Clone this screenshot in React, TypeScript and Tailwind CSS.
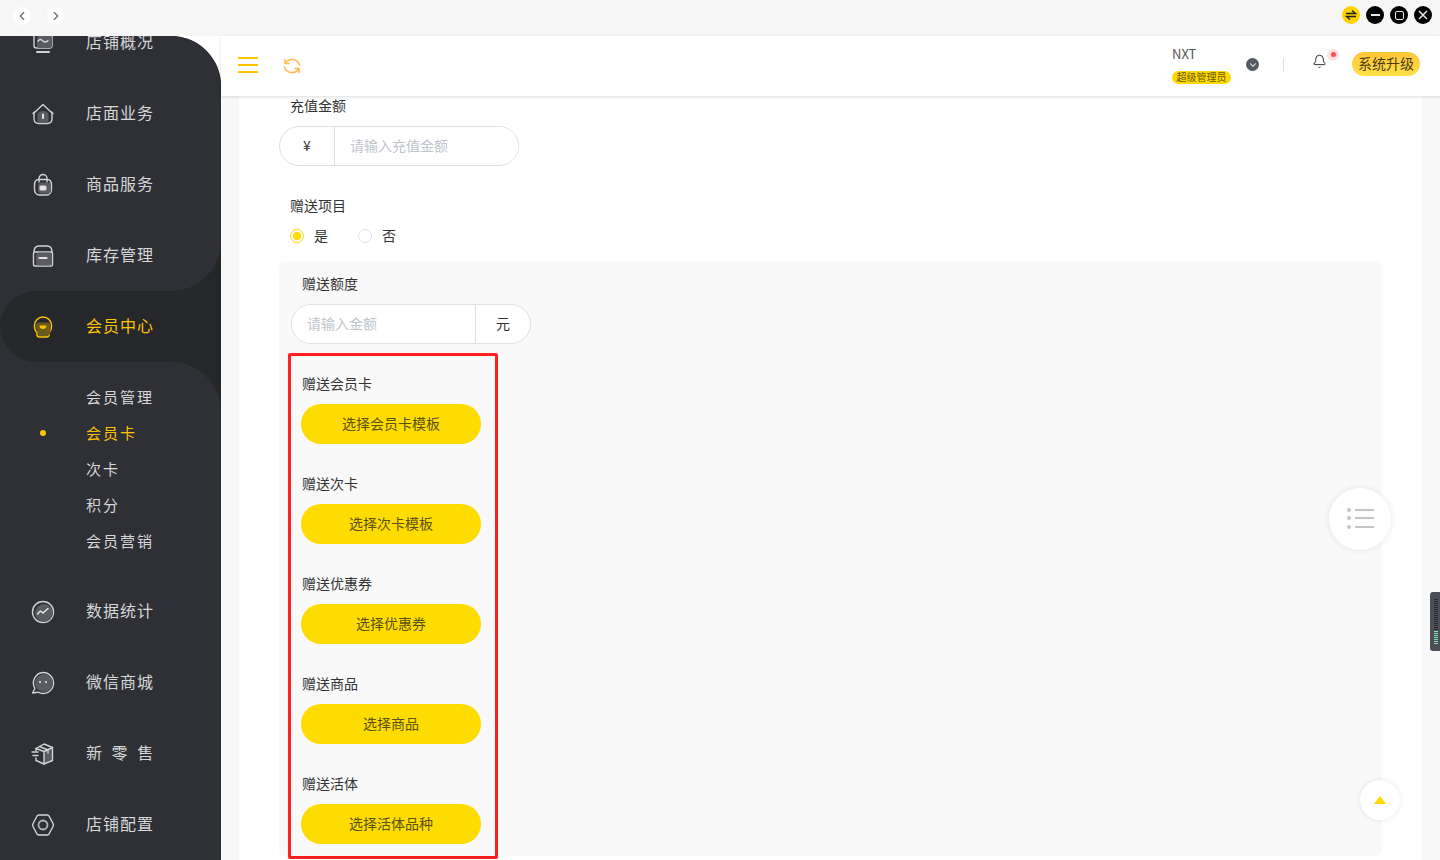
import { ReactNode } from 'react';
import { ChevronLeft, ChevronRight, ChevronDown, Bell } from 'lucide-react';

const font = { fontFamily: '"Noto Sans CJK SC", "Noto Sans", sans-serif' };

function IconBase({ children, color = '#d2d3d6' }: { children: ReactNode; color?: string }) {
  return (
    <svg width="24" height="24" viewBox="0 0 24 24" fill="none" stroke={color} strokeWidth="1.4" strokeLinecap="round" strokeLinejoin="round">
      {children}
    </svg>
  );
}

const icons: Record<string, ReactNode> = {
  monitor: (
    <IconBase>
      <rect x="3" y="3" width="18" height="14" rx="2.5" />
      <rect x="6" y="5" width="15" height="12" rx="2" fill="#5b5c61" stroke="none" />
      <path d="M7 10c1.500-2 3-2 5 0s3.500 1 5-.5" />
      <path d="M6 21h12" strokeWidth="2" />
    </IconBase>
  ),
  home: (
    <IconBase>
      <path d="M8 21.500c-3.500 0-5-1.500-5-5v-5.500L12 2.500l9 8.500v5.500c0 3.500-1.500 5-5 5z" />
      <path d="M2 11.500 3.500 10M22 11.500 20.500 10" />
      <path d="M12 9c3.500 0 5.500 1.500 5.500 4.500v5c0 1.500-1 2.500-2.500 2.500H9c-1.500 0-2.500-1-2.500-2.500v-5C6.500 10.500 8.500 9 12 9z" fill="#5b5c61" stroke="none" />
      <path d="M12 12.500v3.500" strokeWidth="2" stroke="#e4e4e6" />
    </IconBase>
  ),
  bag: (
    <IconBase>
      <path d="M7.500 6.500h9c2.500 0 4 2.500 4 6v3.500c0 3.500-2 6-5 6h-7c-3 0-5-2.500-5-6v-3.500c0-3.500 1.500-6 4-6z" />
      <path d="M8 9V5.500a4 4 0 0 1 8 0V9" />
      <rect x="7" y="9.500" width="13" height="11" rx="3" fill="#5b5c61" stroke="none" />
      <rect x="8.500" y="12.500" width="7" height="5" rx="1.500" fill="#e4e4e6" stroke="none" />
    </IconBase>
  ),
  box: (
    <IconBase>
      <path d="M3 8c0-4 2-6 5-6h8c3 0 5 2 5 6" />
      <rect x="2.500" y="8" width="19" height="14" rx="1.500" />
      <rect x="5" y="8.500" width="16" height="13" rx="3" fill="#5b5c61" stroke="none" />
      <path d="M8.500 14h7" strokeWidth="2.200" stroke="#e4e4e6" />
    </IconBase>
  ),
  bulb: (
    <IconBase color="#ffc400">
      <path d="M8.500 22c-1.500 0-2.500-.8-2.500-2.200v-2.500C4 16 3.500 13.500 3.500 10.500a8.500 8.500 0 0 1 17 0c0 3-.5 5.500-2.500 6.800v2.500c0 1.400-1 2.200-2.500 2.200z" strokeWidth="1.500" />
      <path d="M8 7.500h8.500c2 0 3 1 3 3v5c0 3-1.500 5.500-3.500 5.500H8.500c-1 0-1.800-.6-1.800-1.500V17C5.500 16 5 13 5 10.500c0-2 1-3 3-3z" fill="#6a5a1c" stroke="none" />
      <path d="M8.500 10.500h7c0 2-1.200 3.500-3.500 3.500s-3.500-1.500-3.500-3.500z" fill="#ffc400" stroke="none" />
    </IconBase>
  ),
  chart: (
    <IconBase>
      <circle cx="12" cy="12" r="10.500" />
      <circle cx="13" cy="13" r="9" fill="#5b5c61" stroke="none" />
      <path d="m6.500 14 3-3 2.500 2 5-4.500" strokeWidth="1.500" stroke="#e4e4e6" />
    </IconBase>
  ),
  chat: (
    <IconBase>
      <path d="M12 1.500a10.500 10.500 0 1 1-5 19.700L1.500 22 4 17.500A10.500 10.500 0 0 1 12 1.500z" />
      <circle cx="13" cy="12" r="9" fill="#5b5c61" stroke="none" />
      <circle cx="9" cy="11" r="1" fill="#e4e4e6" stroke="none" />
      <circle cx="15" cy="11" r="1" fill="#e4e4e6" stroke="none" />
    </IconBase>
  ),
  cube: (
    <IconBase>
      <path d="M13 9.500 21.500 6v12L13 22z" fill="#5b5c61" stroke="none" />
      <path d="M5 6.500 13 2l8.500 3.500v13L13 22l-8-3.500V16" />
      <path d="M5 6.500 13 9.500l8.500-4M13 9.500V22M8.500 4.500l8.500 3.500v3" />
      <path d="M5 6.500v2M1 10h6M2 13.500h5" />
    </IconBase>
  ),
  hex: (
    <IconBase>
      <path d="M8 2h8c1 0 1.500.5 2 1l4 7.500c.5 1 .5 2 0 3L18 21c-.5.500-1 1-2 1H8c-1 0-1.500-.5-2-1l-4-7.500c-.5-1-.5-2 0-3L6 3c.5-.5 1-1 2-1z" />
      <circle cx="12" cy="12" r="4.500" strokeWidth="1.800" stroke="#b4b5b8" />
    </IconBase>
  ),
};

function NavRow({ icon, label, active = false }: { icon: string; label: string; active?: boolean }) {
  return (
    <div className={`flex h-[71px] items-center pl-[31px] ${active ? 'text-[#ffc400]' : 'text-[#d6d7d9]'}`}>
      <span className="flex w-[24px] justify-center">{icons[icon]}</span>
      <span className="ml-[31px] whitespace-pre pb-[4px] text-[16px] tracking-[1px] [word-spacing:4px]">{label}</span>
    </div>
  );
}

function SubRow({ label, active = false }: { label: string; active?: boolean }) {
  return (
    <div className={`relative flex h-[36px] items-center pl-[86px] text-[15px] tracking-[2px] ${active ? 'text-[#ffc400]' : 'text-[#d6d7d9]'}`}>
      {active && <span className="absolute left-[40px] top-[15px] h-[6px] w-[6px] rounded-full bg-[#ffc400]" />}
      {label}
    </div>
  );
}

function Sidebar() {
  return (
    <aside className="w-[221px] shrink-0 overflow-hidden rounded-tr-[50px] bg-[#26272b]">
      <div className="-mt-[29px] rounded-br-[50px] bg-[#2f3036]">
        <NavRow icon="monitor" label="店铺概况" />
        <NavRow icon="home" label="店面业务" />
        <NavRow icon="bag" label="商品服务" />
        <NavRow icon="box" label="库存管理" />
      </div>
      <div className="bg-[#2f3036]">
        <div className="rounded-l-[36px] bg-[#26272b]">
          <NavRow icon="bulb" label="会员中心" active />
        </div>
      </div>
      <div className="h-[520px] rounded-tr-[50px] bg-[#2f3036] pt-[17px]">
        <SubRow label="会员管理" />
        <SubRow label="会员卡" active />
        <SubRow label="次卡" />
        <SubRow label="积分" />
        <SubRow label="会员营销" />
        <div className="mt-[17px]">
          <NavRow icon="chart" label="数据统计" />
          <NavRow icon="chat" label="微信商城" />
          <NavRow icon="cube" label="新 零 售" />
          <NavRow icon="hex" label="店铺配置" />
        </div>
      </div>
    </aside>
  );
}

function Header() {
  return (
    <header className="relative z-10 flex h-[60px] shrink-0 items-center bg-white pl-[17px] pr-[20px] shadow-[0_1px_3px_rgba(0,0,0,0.14)]">
      <div className="mt-[-2px] flex w-[20px] flex-col gap-[5px]">
        <span className="h-[2px] bg-[#ffc400]" />
        <span className="h-[2px] bg-[#ffc400]" />
        <span className="h-[2px] bg-[#ffc400]" />
      </div>
      <svg width="18" height="18" viewBox="0 0 18 18" fill="none" stroke="#ffb84a" strokeWidth="1.5" strokeLinecap="round" strokeLinejoin="round" className="ml-[25px]">
        <path d="M2.500 6A7.800 7.800 0 0 1 16.500 8" />
        <path d="M15.500 12A7.800 7.800 0 0 1 1.500 10" />
        <path d="M2 2.500V6.500h4" />
        <path d="M16 15.500V11.500h-4" />
      </svg>
      <div className="ml-auto flex items-center">
        <div className="mb-[4px] flex w-[60px] flex-col items-start">
          <span className="text-[13px] leading-[18px] text-[#555]">NXT</span>
          <span className="mt-[8px] flex h-[13px] w-[59px] items-center justify-center rounded-full bg-[#ffd800] pb-[1px] text-[10px] leading-none text-[#665a10]">超级管理员</span>
        </div>
        <span className="ml-[14px] mt-[-3px] flex h-[13px] w-[13px] items-center justify-center rounded-full bg-[#555a63]">
          <ChevronDown size={10} strokeWidth={2.5} className="text-white" />
        </span>
        <span className="ml-[24px] mt-[-2px] h-[14px] w-px bg-[#dcdfe6]" />
        <div className="relative ml-[28px] mt-[-10px]">
          <Bell size={15} strokeWidth={1.6} className="text-[#333]" />
          <span className="absolute -right-[12px] -top-[5px] flex h-[12px] w-[12px] items-center justify-center rounded-full bg-[#ffe0e0]">
            <span className="h-[5px] w-[5px] rounded-full bg-[#ff4d4f]" />
          </span>
        </div>
        <button className="ml-[25px] mt-[-4px] flex h-[24px] w-[68px] items-center justify-center rounded-full bg-gradient-to-b from-[#ffc637] to-[#ffe14a] pb-[3px] text-[14px] leading-none text-[#4a3a10]">系统升级</button>
      </div>
    </header>
  );
}

const gifts = [
  { label: '赠送会员卡', action: '选择会员卡模板' },
  { label: '赠送次卡', action: '选择次卡模板' },
  { label: '赠送优惠券', action: '选择优惠券' },
  { label: '赠送商品', action: '选择商品' },
  { label: '赠送活体', action: '选择活体品种' },
];

function Form() {
  return (
    <div className="h-full bg-white pl-[40px] pr-[40px] text-[14px] text-[#333]">
      <div className="h-[20px] pl-[11px] leading-[18px]">充值金额</div>
      <div className="mt-[10px] flex h-[40px] w-[240px] overflow-hidden rounded-full border border-[#dcdfe6]">
        <span className="flex w-[55px] items-center justify-center border-r border-[#dcdfe6] pb-[2px]">¥</span>
        <input placeholder="请输入充值金额" className="min-w-0 flex-1 bg-white pb-[2px] pl-[15px] outline-none placeholder:text-[#c0c4cc]" />
      </div>

      <div className="mt-[30px] h-[20px] pl-[11px] leading-[18px]">赠送项目</div>
      <div className="mt-[10px] flex h-[20px] items-center pl-[11px]">
        <span className="flex h-[14px] w-[14px] items-center justify-center rounded-full border border-[#ffd800]">
          <span className="h-[8px] w-[8px] rounded-full bg-[#ffd800]" />
        </span>
        <span className="mb-[2px] ml-[10px]">是</span>
        <span className="ml-[30px] h-[14px] w-[14px] rounded-full border border-[#dcdfe6] bg-white" />
        <span className="mb-[2px] ml-[10px]">否</span>
      </div>

      <div className="mt-[16px] h-[594px] rounded-[6px] bg-[#f9f9f9] pl-[12px] pt-[12px]">
        <div className="h-[20px] pl-[11px] leading-[18px]">赠送额度</div>
        <div className="mt-[10px] flex h-[40px] w-[240px] overflow-hidden rounded-full border border-[#dcdfe6] bg-white">
          <input placeholder="请输入金额" className="min-w-0 flex-1 bg-white pb-[2px] pl-[15px] outline-none placeholder:text-[#c0c4cc]" />
          <span className="flex w-[55px] items-center justify-center border-l border-[#dcdfe6] pb-[2px]">元</span>
        </div>

        <div className="-ml-[3px] mt-[9px] flex w-[210px] flex-col gap-[30px] rounded-[2px] border-[3px] border-[#ff1f1f] pb-[12px] pl-[10px] pt-[18px]">
          {gifts.map((g) => (
            <div key={g.label}>
              <div className="h-[20px] pl-[1px] leading-[18px]">{g.label}</div>
              <button className="mt-[10px] flex h-[40px] w-[180px] items-center justify-center rounded-full bg-[#ffdc00] pb-[2px] text-[14px] text-[#5c5215]">{g.action}</button>
            </div>
          ))}
        </div>
      </div>
    </div>
  );
}

function Floating() {
  return (
    <>
      <div className="absolute left-[1108px] top-[392px] flex h-[62px] w-[62px] flex-col justify-center gap-[4.500px] rounded-full bg-white pl-[18px] pb-[2px] shadow-[0_0_6px_rgba(0,0,0,0.1)]">
        {[0, 1, 2].map((i) => (
          <div key={i} className="flex items-center gap-[4px]">
            <span className="h-[4px] w-[4px] rounded-full bg-[#c4c4c4]" />
            <span className="h-[2px] w-[19px] bg-[#c4c4c4]" />
          </div>
        ))}
      </div>
      <div className="absolute left-[1139px] top-[684px] flex h-[40px] w-[40px] items-center justify-center rounded-full bg-white shadow-[0_0_5px_rgba(0,0,0,0.1)]">
        <span className="h-0 w-0 border-x-[6px] border-b-[8px] border-x-transparent border-b-[#ffd800]" />
      </div>
      <div className="absolute left-[1209px] top-[496px] flex h-[59px] w-[11px] flex-col items-center justify-center gap-[1px] rounded-l-[3px] bg-[#4c4f57]">
        {Array.from({ length: 23 }).map((_, i) => (
          <span key={i} className={`h-[1px] w-[4px] ${i > 15 ? 'bg-[#7fe0b0]' : 'bg-[#26282c]'}`} />
        ))}
      </div>
    </>
  );
}

export default function App() {
  return (
    <div className="flex h-screen flex-col overflow-hidden bg-white" style={font}>
      <div className="flex h-[36px] shrink-0 items-center bg-[#f6f6f6] pb-[4px] pl-[13px] pr-[8px]">
        <span className="flex h-[18px] w-[18px] items-center justify-center rounded-full bg-white text-[#666]">
          <ChevronLeft size={14} />
        </span>
        <span className="ml-[16px] flex h-[18px] w-[18px] items-center justify-center rounded-full bg-white text-[#666]">
          <ChevronRight size={14} />
        </span>
        <div className="ml-auto mt-[-2px] flex items-center gap-[6px]">
          <span className="flex h-[18px] w-[18px] items-center justify-center rounded-full bg-[#ffd200]">
            <svg width="12" height="12" viewBox="0 0 12 12" fill="none" stroke="#222" strokeWidth="1.3">
              <path d="M1 4.500h9.500L7 1.500M11 7.500H1.500L5 10.500" />
            </svg>
          </span>
          <span className="flex h-[18px] w-[18px] items-center justify-center rounded-full bg-black">
            <span className="h-[2px] w-[9px] bg-[#e8e8e8]" />
          </span>
          <span className="flex h-[18px] w-[18px] items-center justify-center rounded-full bg-black">
            <span className="h-[9px] w-[9px] rounded-[2px] border-[1.500px] border-[#e8e8e8]" />
          </span>
          <span className="flex h-[18px] w-[18px] items-center justify-center rounded-full bg-black">
            <svg width="10" height="10" viewBox="0 0 10 10" stroke="#e8e8e8" strokeWidth="1.500">
              <path d="m1 1 8 8M9 1 1 9" />
            </svg>
          </span>
        </div>
      </div>

      <div className="flex min-h-0 flex-1">
        <Sidebar />
        <div className="flex min-w-0 flex-1 flex-col">
          <Header />
          <main className="relative min-h-0 flex-1 overflow-hidden bg-[#f8f8f8] pl-[18px] pr-[18px]">
            <Form />
            <Floating />
          </main>
        </div>
      </div>
    </div>
  );
}
